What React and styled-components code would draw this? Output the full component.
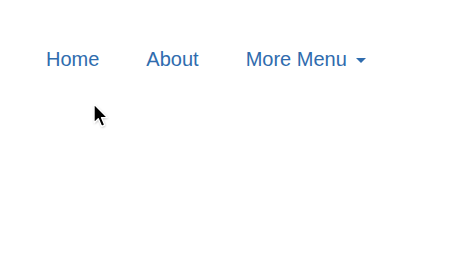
import React from "react";
import styled, { createGlobalStyle } from "styled-components";

const Global = createGlobalStyle`
  html, body { margin: 0; padding: 0; background: #ffffff; }
  body { font-family: "Liberation Sans", Arial, Helvetica, sans-serif; }
`;

const Page = styled.div`
  position: relative;
  width: 474px;
  height: 258px;
  background: #ffffff;
  overflow: hidden;
`;

const Nav = styled.nav`
  display: flex;
  align-items: center;
  gap: 47px;
  padding: 48px 0 0 46px;
`;

const NavLink = styled.a`
  display: flex;
  align-items: center;
  font-size: 20px;
  line-height: 23px;
  color: #2f6cae;
  text-decoration: none;
  cursor: pointer;
`;

const Caret = styled.span`
  display: inline-block;
  width: 0;
  height: 0;
  margin-left: 9px;
  margin-top: 1px;
  border-left: 5px solid transparent;
  border-right: 5px solid transparent;
  border-top: 5px solid #2f6cae;
`;

const Pointer = styled.svg`
  position: absolute;
  left: 91px;
  top: 101px;
`;

export default function App() {
  return (
    <Page>
      <Global />
      <Nav>
        <NavLink>Home</NavLink>
        <NavLink>About</NavLink>
        <NavLink>
          More Menu
          <Caret />
        </NavLink>
      </Nav>
      <Pointer width="22" height="32" viewBox="0 0 22 32">
        <defs>
          <filter id="sh" x="-30%" y="-30%" width="160%" height="160%">
            <feGaussianBlur stdDeviation="0.9" />
          </filter>
        </defs>
        <path
          d="M3 3 L3 22 L7.3 17.8 L10.6 25.5 L13.8 24 L10.6 16.6 L16.4 16.6 Z"
          fill="rgba(0,0,0,0.35)"
          filter="url(#sh)"
          transform="translate(0.5,1)"
        />
        <path
          d="M3 3 L3 22 L7.3 17.8 L10.6 25.5 L13.8 24 L10.6 16.6 L16.4 16.6 Z"
          fill="#000"
          stroke="#fff"
          strokeWidth="1.4"
          strokeLinejoin="round"
        />
      </Pointer>
    </Page>
  );
}
